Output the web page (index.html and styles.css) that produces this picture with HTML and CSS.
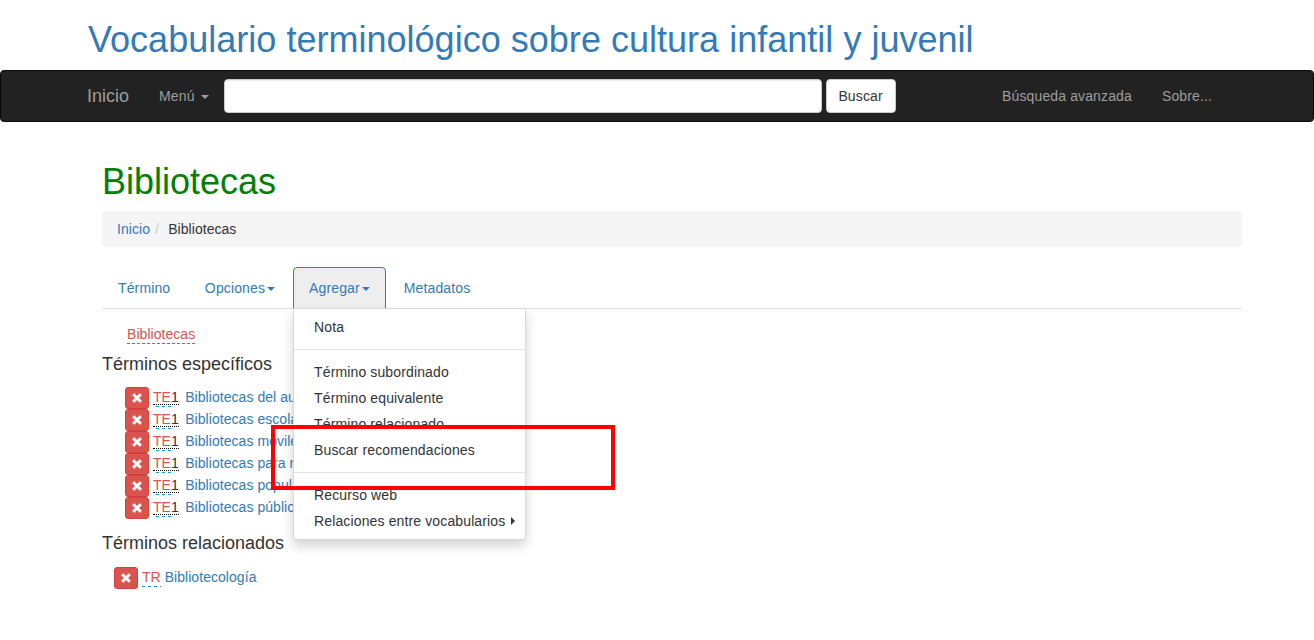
FILE: index.html
```html
<!DOCTYPE html>
<html lang="es">
<head>
<meta charset="utf-8">
<title>Bibliotecas</title>
<link rel="stylesheet" href="styles.css">
</head>
<body>
<svg class="sprite" width="0" height="0" aria-hidden="true">
  <symbol id="x-icon" viewBox="0 0 12 12">
    <path d="M3.2 1.4 6 4.2 8.8 1.4 10.6 3.2 7.8 6 10.6 8.8 8.8 10.6 6 7.8 3.2 10.6 1.4 8.8 4.2 6 1.4 3.2Z" fill="#fff" stroke="#fff" stroke-width=".5" stroke-linejoin="round"/>
  </symbol>
</svg>
<header class="site-title container"><h1><a href="#">Vocabulario terminológico sobre cultura infantil y juvenil</a></h1></header>
<nav class="navbar">
  <div class="navbar-inner">
    <a class="brand" href="#">Inicio</a>
    <a class="nav-link" href="#">Menú <span class="caret"></span></a>
    <form class="search">
      <input class="search-input" type="text" aria-label="Buscar">
      <button class="search-btn" type="button">Buscar</button>
    </form>
    <div class="nav-right">
      <a class="nav-link" href="#">Búsqueda avanzada</a>
      <a class="nav-link" href="#">Sobre...</a>
    </div>
  </div>
</nav>
<main class="container main">
  <h1 class="term-title">Bibliotecas</h1>
  <ol class="breadcrumb">
    <li><a href="#">Inicio</a></li>
    <li class="sep">/</li>
    <li>Bibliotecas</li>
  </ol>
  <ul class="tabs">
    <li><a href="#">Término</a></li>
    <li><a href="#">Opciones<span class="caret"></span></a></li>
    <li class="open">
      <a href="#">Agregar<span class="caret"></span></a>
      <ul class="menu">
        <li><a href="#">Nota</a></li>
        <li class="divider"></li>
        <li><a href="#">Término subordinado</a></li>
        <li><a href="#">Término equivalente</a></li>
        <li><a href="#">Término relacionado</a></li>
        <li><a href="#">Buscar recomendaciones</a></li>
        <li class="divider"></li>
        <li><a href="#">Recurso web</a></li>
        <li><a class="has-sub" href="#">Relaciones entre vocabularios<span class="sub-caret"></span></a></li>
      </ul>
    </li>
    <li><a href="#">Metadatos</a></li>
  </ul>
  <p class="pref-term"><span class="dashed red">Bibliotecas</span></p>
  <h4 class="section">Términos específicos</h4>
  <ul class="terms narrower">
    <li><button class="del" type="button"><svg class="x"><use href="#x-icon"/></svg></button><span class="rel"><span class="dashed red">TE</span>1</span><a href="#">Bibliotecas del aula</a></li>
    <li><button class="del" type="button"><svg class="x"><use href="#x-icon"/></svg></button><span class="rel"><span class="dashed red">TE</span>1</span><a href="#">Bibliotecas escolares</a></li>
    <li><button class="del" type="button"><svg class="x"><use href="#x-icon"/></svg></button><span class="rel"><span class="dashed red">TE</span>1</span><a href="#">Bibliotecas moviles</a></li>
    <li><button class="del" type="button"><svg class="x"><use href="#x-icon"/></svg></button><span class="rel"><span class="dashed red">TE</span>1</span><a href="#">Bibliotecas para niños</a></li>
    <li><button class="del" type="button"><svg class="x"><use href="#x-icon"/></svg></button><span class="rel"><span class="dashed red">TE</span>1</span><a href="#">Bibliotecas populares</a></li>
    <li><button class="del" type="button"><svg class="x"><use href="#x-icon"/></svg></button><span class="rel"><span class="dashed red">TE</span>1</span><a href="#">Bibliotecas públicas</a></li>
  </ul>
  <h4 class="section">Términos relacionados</h4>
  <ul class="terms related">
    <li><button class="del" type="button"><svg class="x"><use href="#x-icon"/></svg></button><span class="tr"><span class="dashed red">TR</span></span><a href="#">Bibliotecología</a></li>
  </ul>
</main>
<div class="highlight"></div>
</body>
</html>
```
FILE: styles.css
```css
* { box-sizing: border-box; }
html, body { margin: 0; padding: 0; }
body {
  font-family: "Liberation Sans", Arial, sans-serif;
  font-size: 14px;
  line-height: 20px;
  letter-spacing: .13px;
  color: #333;
  background: #fff;
}
a { color: #337ab7; text-decoration: none; }
ul, ol { list-style: none; margin: 0; padding: 0; }
.sprite { position: absolute; }

.container { width: 1170px; margin: 0 auto; padding: 0 15px; }

.site-title { padding-left: 16px; }
.site-title h1 {
  margin: 20px 0 10px;
  font-size: 36px;
  font-weight: 500;
  line-height: 1.1;
  letter-spacing: .02px;
}

.navbar {
  height: 52px;
  margin-bottom: 20px;
  background: #222;
  border: 1px solid #080808;
  border-radius: 4px;
}
.navbar-inner { display: flex; align-items: flex-start; width: 1170px; height: 50px; margin: 0 auto; }
.brand { padding: 15px; font-size: 18px; line-height: 20px; letter-spacing: 0; color: #9d9d9d; }
.nav-link { padding: 15px; line-height: 20px; color: #9d9d9d; }
.caret {
  display: inline-block;
  width: 0;
  height: 0;
  margin-left: 2px;
  vertical-align: middle;
  border-top: 4px solid;
  border-right: 4px solid transparent;
  border-left: 4px solid transparent;
}
.search { display: flex; gap: 4px; margin-top: 8px; }
.search-input {
  width: 598px;
  height: 34px;
  padding: 6px 12px;
  font: inherit;
  background: #fff;
  border: 1px solid #ccc;
  border-radius: 4px;
  box-shadow: inset 0 1px 1px rgba(0,0,0,.075);
}
.search-btn {
  width: 70px;
  height: 34px;
  padding: 6px 0;
  font: inherit;
  letter-spacing: inherit;
  color: #333;
  background: #fff;
  border: 1px solid #ccc;
  border-radius: 4px;
}
.nav-right { display: flex; margin-left: auto; margin-right: 15px; }

.main { display: flow-root; padding: 0 15px 0 30px; width: 1185px; margin-left: 72px; }
.term-title {
  margin: 20px 0 10px;
  font-size: 36px;
  font-weight: 500;
  line-height: 1.1;
  letter-spacing: 0;
  color: green;
}
.breadcrumb {
  display: flex;
  height: 36px;
  padding: 8px 15px;
  margin-bottom: 20px;
  letter-spacing: .05px;
  background: #f5f5f5;
  border-radius: 4px;
}
.breadcrumb .sep { width: 18.2px; padding: 0 5px; color: #ccc; }

.tabs { display: flex; height: 42px; border-bottom: 1px solid #ddd; }
.tabs > li { position: relative; height: 42px; margin-right: 2px; }
.tabs > li > a {
  display: block;
  height: 42px;
  padding: 10px 15px;
  border: 1px solid transparent;
  border-radius: 4px 4px 0 0;
}
.tabs > li:first-child > a { padding-right: 15.6px; }
.tabs > li.open > a { background: #eee; border-color: #337ab7; }

.menu {
  position: absolute;
  top: 41px;
  left: 0;
  z-index: 10;
  width: 233px;
  padding: 5px 0;
  background: #fff;
  border: 1px solid rgba(0,0,0,.15);
  border-radius: 0 0 4px 4px;
  box-shadow: 0 6px 12px rgba(0,0,0,.175);
}
.menu a { display: block; padding: 3px 20px; color: #333; white-space: nowrap; }
.menu a.has-sub { display: flex; align-items: center; justify-content: space-between; padding-right: 10px; }
.sub-caret {
  width: 0;
  height: 0;
  border-top: 4px solid transparent;
  border-bottom: 4px solid transparent;
  border-left: 4px solid #333;
}
.divider { height: 1px; margin: 9px 0; background: #e5e5e5; }

.red { color: #d9534f; }
.dashed {
  padding-bottom: 2px;
  background: repeating-linear-gradient(90deg, #0a9ae0 0 3px, transparent 3px 6px) 0 100% / 100% 1px no-repeat;
}
.pref-term { margin: 15px 0 0; padding-left: 25px; letter-spacing: .05px; }
.pref-term .dashed {
  background-image: repeating-linear-gradient(90deg, #0a9ae0 0 3px, transparent 3px 5px);
}
.section { margin: 11px 0 10px; font-size: 18px; font-weight: 500; line-height: 19.8px; letter-spacing: 0; }
.terms { letter-spacing: .05px; }
.terms li { display: flex; align-items: flex-start; height: 22px; }
.narrower { margin-top: 12px; margin-bottom: 15px; padding-left: 23px; }
.related { margin-top: 13px; padding-left: 12px; }
.del {
  display: flex;
  align-items: center;
  justify-content: center;
  width: 24px;
  height: 22px;
  padding: 0;
  margin-right: 4px;
  background: #d9534f;
  border: 1px solid #d43f3a;
  border-radius: 3px;
}
.x { display: block; width: 12px; height: 12px; }
.rel {
  height: 18px;
  margin-right: 6.4px;
  border-bottom: 1px dotted #000;
}
.rel .dashed { background-position: 3px 100%; background-size: 15px 1px; }
.tr { margin-right: 3.9px; }

.highlight {
  position: absolute;
  left: 271px;
  top: 425px;
  width: 344px;
  height: 65px;
  border: 4px solid #f00;
  pointer-events: none;
  z-index: 20;
}
```
